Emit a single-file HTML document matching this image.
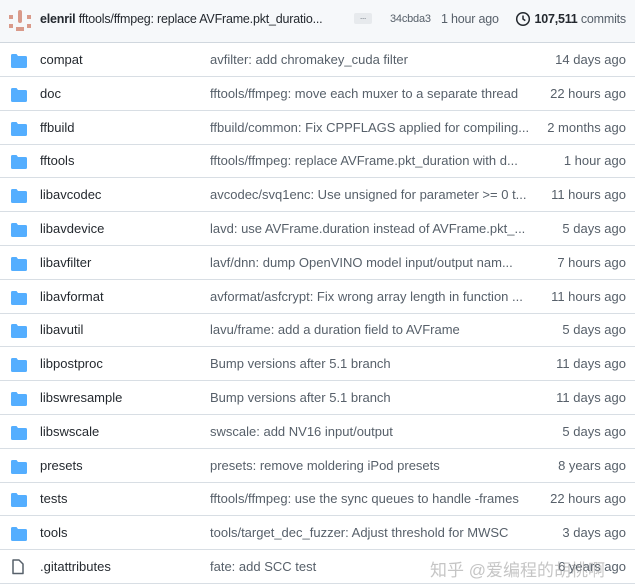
<!DOCTYPE html><html><head><style>
body{margin:0;width:635px;height:588px;overflow:hidden;background:#fff;font-family:"Liberation Sans",sans-serif;font-size:13px;color:#24292f;position:relative}
.hd{position:absolute;left:0;top:0;width:635px;height:42px;background:#f6f8fa;border-bottom:1px solid #d0d7de;font-size:12.5px;letter-spacing:-0.2px}
.r{position:absolute;left:0;width:635px;height:33px;border-bottom:1px solid #d8dee4}
.r span{position:absolute;top:9px;white-space:nowrap}
.n{left:40px}.m{left:210px;color:#57606a}.t{right:9px;color:#57606a}
.ic{position:absolute;left:11px;top:11px}
</style></head><body>
<div class="hd">
<div style="position:absolute;left:9px;top:10px;width:22px;height:22px">
<div style="position:absolute;left:9px;top:0;width:4px;height:13px;background:#d99a8a;border-radius:2px"></div>
<div style="position:absolute;left:0;top:5px;width:4px;height:4px;background:#d99a8a"></div>
<div style="position:absolute;left:18px;top:5px;width:4px;height:4px;background:#d99a8a"></div>
<div style="position:absolute;left:0;top:14px;width:4px;height:4px;background:#d99a8a"></div>
<div style="position:absolute;left:18px;top:14px;width:4px;height:4px;background:#d99a8a"></div>
<div style="position:absolute;left:7px;top:17px;width:8px;height:4px;background:#d99a8a"></div>
</div>
<span style="position:absolute;left:40px;top:12px;white-space:nowrap"><b>elenril</b> fftools/ffmpeg: replace AVFrame.pkt_duratio...</span>
<span style="position:absolute;left:354px;top:13px;width:18px;height:11px;background:#e7eaed;border-radius:2px;font-size:8px;text-align:center;line-height:8px;color:#57606a">...</span>
<span style="position:absolute;left:390px;top:13px;font-size:11px;color:#57606a">34cbda3</span>
<span style="position:absolute;left:441px;top:12px;color:#57606a">1 hour ago</span>
<svg style="position:absolute;left:515px;top:11px" width="16" height="16" viewBox="0 0 16 16"><circle cx="8" cy="8" r="6.3" fill="none" stroke="#24292f" stroke-width="1.5"/><path d="M8 4.5V8l2.3 1.6" fill="none" stroke="#24292f" stroke-width="1.5"/></svg>
<span style="position:absolute;right:9px;top:12px;white-space:nowrap"><b>107,511</b> <span style="color:#57606a">commits</span></span>
</div>
<div id="rows"></div>
<script>
var d=[["compat","avfilter: add chromakey_cuda filter","14 days ago"],["doc","fftools/ffmpeg: move each muxer to a separate thread","22 hours ago"],["ffbuild","ffbuild/common: Fix CPPFLAGS applied for compiling...","2 months ago"],["fftools","fftools/ffmpeg: replace AVFrame.pkt_duration with d...","1 hour ago"],["libavcodec","avcodec/svq1enc: Use unsigned for parameter >= 0 t...","11 hours ago"],["libavdevice","lavd: use AVFrame.duration instead of AVFrame.pkt_...","5 days ago"],["libavfilter","lavf/dnn: dump OpenVINO model input/output nam...","7 hours ago"],["libavformat","avformat/asfcrypt: Fix wrong array length in function ...","11 hours ago"],["libavutil","lavu/frame: add a duration field to AVFrame","5 days ago"],["libpostproc","Bump versions after 5.1 branch","11 days ago"],["libswresample","Bump versions after 5.1 branch","11 days ago"],["libswscale","swscale: add NV16 input/output","5 days ago"],["presets","presets: remove moldering iPod presets","8 years ago"],["tests","fftools/ffmpeg: use the sync queues to handle -frames","22 hours ago"],["tools","tools/target_dec_fuzzer: Adjust threshold for MWSC","3 days ago"],[".gitattributes","fate: add SCC test","6 years ago"]];
var h="";d.forEach(function(x,i){var top=43+i*33.8;
var ic=i<15?'<svg class="ic" width="16" height="14" viewBox="0 0 16 14"><path d="M0 1.5A1.5 1.5 0 0 1 1.5 0h4l1.5 2h7.5A1.5 1.5 0 0 1 16 3.5v9a1.5 1.5 0 0 1-1.5 1.5h-13A1.5 1.5 0 0 1 0 12.5z" fill="#54aeff"/></svg>':'<svg class="ic" style="top:9px" width="14" height="16" viewBox="0 0 14 16"><path d="M2 1h6l4 4v9.5H2z" fill="none" stroke="#57606a" stroke-width="1.5" stroke-linejoin="round"/></svg>';
h+='<div class="r" style="top:'+top+'px">'+ic+'<span class="n">'+x[0]+'</span><span class="m">'+x[1].replace(/</g,"&lt;").replace(/>/g,"&gt;")+'</span><span class="t">'+x[2]+'</span></div>';});
document.getElementById("rows").innerHTML=h;
</script>
<span style="position:absolute;left:430px;top:556px;font-size:17px;color:rgba(150,150,150,0.55);font-family:'Liberation Sans','Noto Sans CJK SC',sans-serif;white-space:nowrap">知乎 @爱编程的胡桃啊</span>
</body></html>
